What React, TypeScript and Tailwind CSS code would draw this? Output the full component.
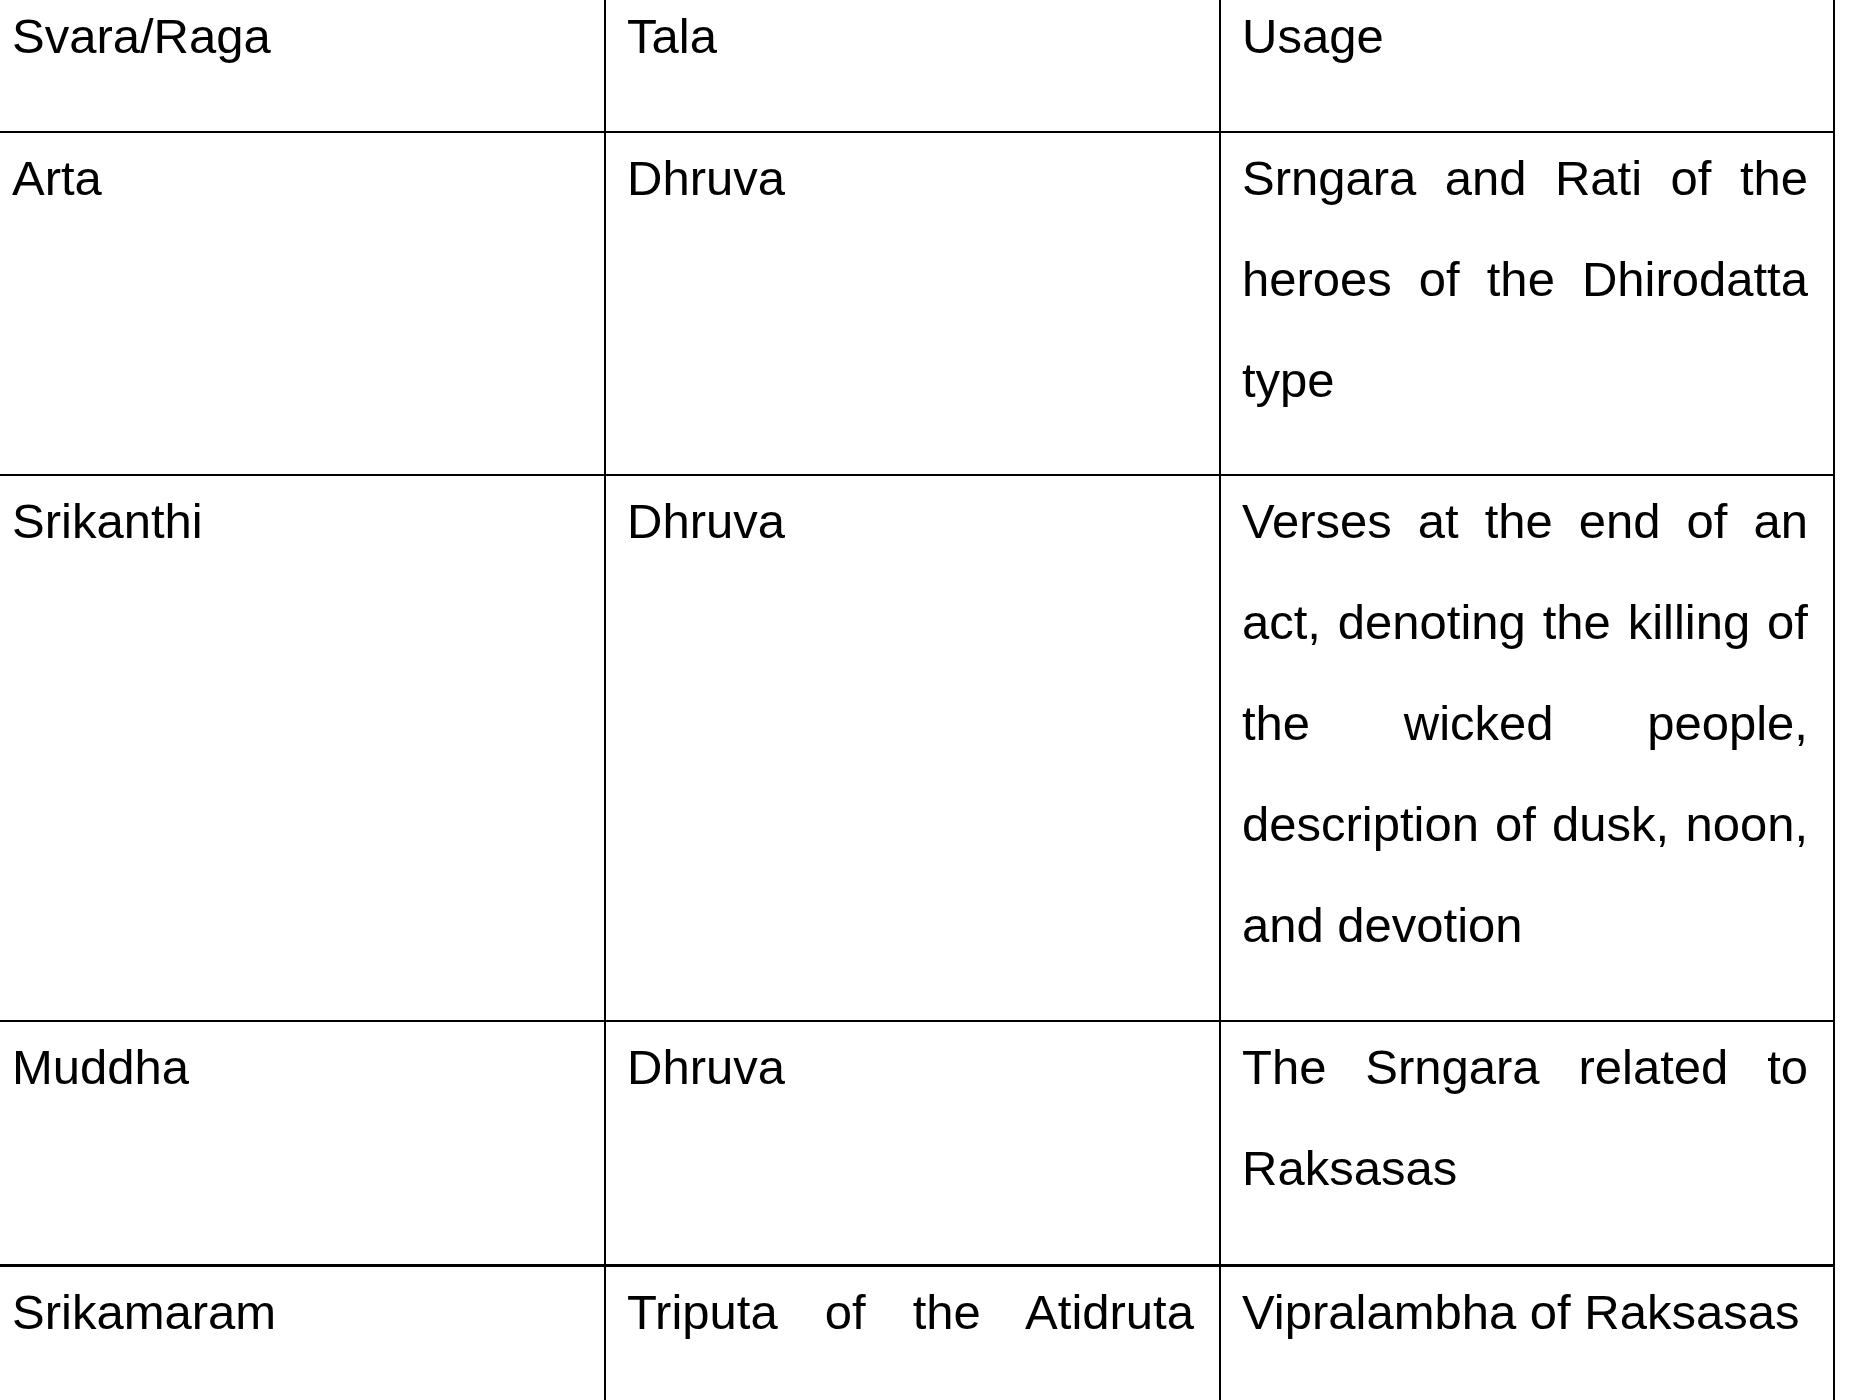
const rows = [
  { h: 'h-[139px]', top: 'border-t-2', cells: ['Svara/Raga', 'Tala', 'Usage'] },
  {
    h: 'h-[343px]',
    top: 'border-t-2',
    cells: ['Arta', 'Dhruva', 'Srngara and Rati of the heroes of the Dhirodatta type'],
  },
  {
    h: 'h-[546px]',
    top: 'border-t-2',
    cells: [
      'Srikanthi',
      'Dhruva',
      'Verses at the end of an act, denoting the killing of the wicked people, description of dusk, noon, and devotion',
    ],
  },
  { h: 'h-[244px]', top: 'border-t-2', cells: ['Muddha', 'Dhruva', 'The Srngara related to Raksasas'] },
  {
    h: 'h-[244px]',
    top: 'border-t-[3px]',
    cells: ['Srikamaram', 'Triputa of the Atidruta', 'Vipralambha of Raksasas'],
  },
];

export default function App() {
  return (
    <div className="h-[1400px] w-full overflow-hidden bg-white text-black">
      <div className="-ml-[11px] -mt-[8px] w-[1846px] font-['Liberation_Sans',Arial,sans-serif] text-[49px] leading-[101px]">
        {rows.map((row, i) => (
          <div
            key={i}
            className={`grid grid-cols-[615px_615px_616px] border-black ${row.top} ${row.h}`}
          >
            {row.cells.map((text, j) => (
              <div
                key={j}
                className={`flex flex-col border-l-2 border-black pl-[21px] pr-[25px] ${
                  j === 2 ? 'border-r-2' : ''
                }`}
              >
                <p
                  className={`text-justify ${i === 0 ? '-mt-[8px]' : '-mt-[5px]'} ${
                    i === 4 && j === 1 ? '[text-align-last:justify]' : ''
                  }`}
                >
                  {text}
                </p>
              </div>
            ))}
          </div>
        ))}
      </div>
    </div>
  );
}
